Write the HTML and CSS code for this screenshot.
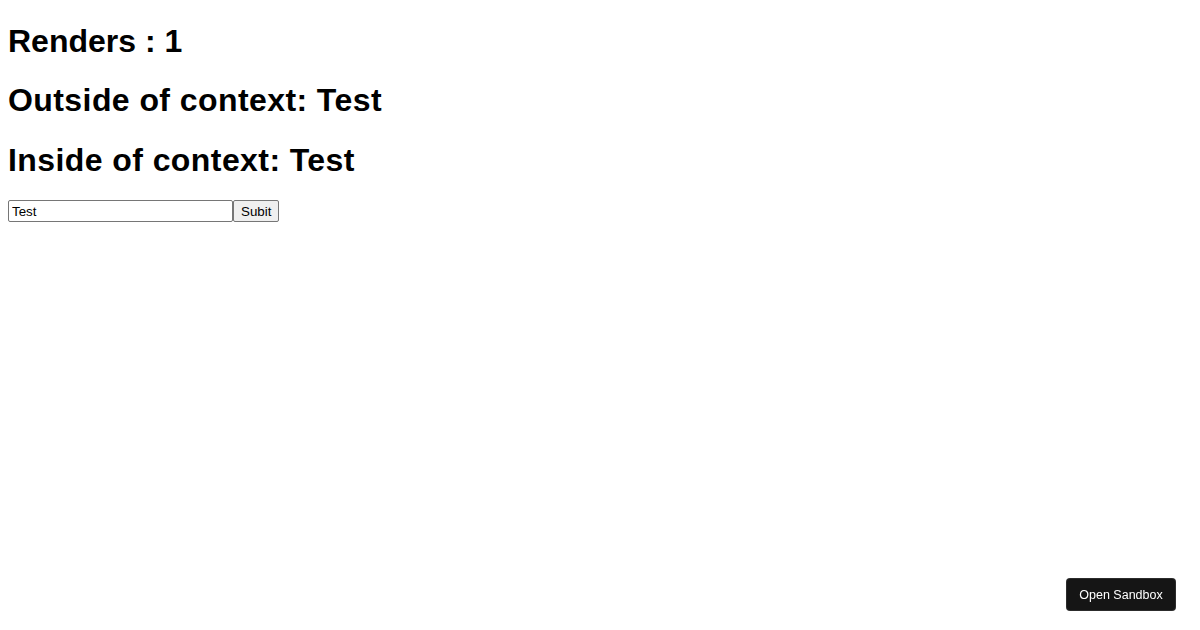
FILE: index.html
```html
<!DOCTYPE html>
<html>
<head>
<meta charset="utf-8">
<link rel="stylesheet" href="styles.css">
</head>
<body>
<div class="app">
  <h1 class="title title--first">Renders : 1</h1>
  <h1 class="title title--wide">Outside of context: Test</h1>
  <h1 class="title title--wide">Inside of context: Test</h1>
  <form class="form">
    <input class="field" type="text" value="Test"><button class="submit" type="button">Subit</button>
  </form>
</div>
<a class="sandbox-btn">Open Sandbox</a>
</body>
</html>
```
FILE: styles.css
```css
html, body {
  background: #fff;
}
body {
  margin: 8px;
  font-family: "Liberation Sans", Arial, sans-serif;
  color: #000;
}
.title {
  font-size: 32px;
  font-weight: bold;
  margin: 21.44px 0;
  line-height: 38px;
}
.title--first {
  margin-top: 14px;
}
.title--wide {
  letter-spacing: 0.42px;
}
.form {
  display: flex;
  align-items: stretch;
}
.field {
  font-family: "Liberation Sans", Arial, sans-serif;
  font-size: 13.33px;
  width: 225px;
  height: 22px;
  box-sizing: border-box;
  border: 1px solid #767676;
  border-radius: 2px;
  padding: 1px 3px;
  margin: 0;
  color: #000;
}
.submit {
  font-family: "Liberation Sans", Arial, sans-serif;
  font-size: 13.33px;
  height: 22px;
  box-sizing: border-box;
  border: 1px solid #767676;
  border-radius: 2px;
  background: #efefef;
  padding: 1px 7px;
  margin: 0;
  color: #000;
}
.sandbox-btn {
  position: fixed;
  right: 24px;
  bottom: 19px;
  width: 110px;
  height: 33px;
  box-sizing: border-box;
  display: flex;
  align-items: center;
  justify-content: center;
  background: #151515;
  color: #fff;
  border-radius: 4px;
  font-family: "Liberation Sans", Arial, sans-serif;
  font-size: 12.5px;
  border: 1px solid rgba(255,255,255,0.1);
}
```
